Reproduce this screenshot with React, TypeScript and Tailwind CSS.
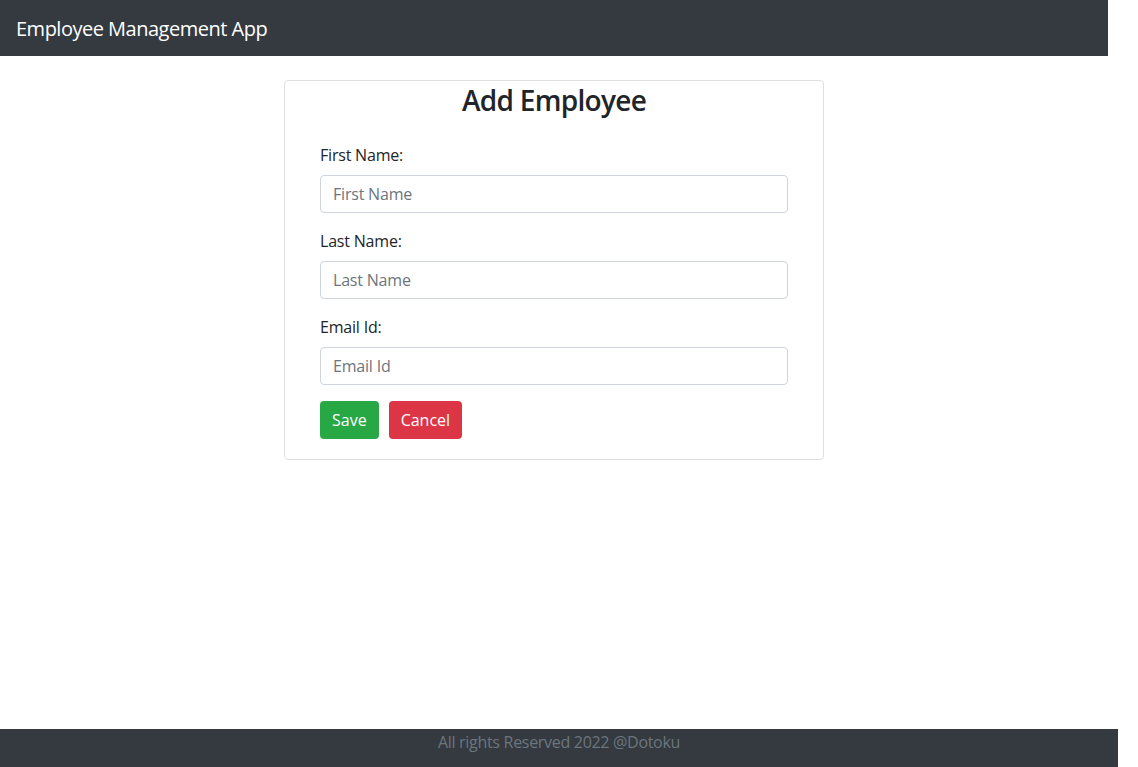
import React from 'react';

const font = { fontFamily: '"Open Sans", "Noto Sans", sans-serif' };

function Field({ label, placeholder }: { label: string; placeholder: string }) {
  return (
    <div className="mb-4">
      <label className="block mb-2 text-base leading-6 text-[#212529] tracking-[-0.2px]">{label}</label>
      <input
        type="text"
        placeholder={placeholder}
        className="block w-full h-[38px] px-3 rounded border border-[#ced4da] bg-white text-base text-[#495057] placeholder:text-[#6c757d] outline-none tracking-[-0.2px]"
      />
    </div>
  );
}

export default function App() {
  return (
    <div className="min-h-[767px] flex flex-col bg-white" style={font}>
      <header className="w-[1108px] h-14 bg-[#343a40] flex items-center px-4 pt-0.5">
        <span className="text-white text-xl tracking-[-0.5px]">Employee Management App</span>
      </header>

      <main className="flex-1 flex justify-center pt-6 pr-[30px]">
        <div className="w-[540px] h-fit border border-[#dfdfdf] rounded">
          <h3 className="text-center text-[28px] leading-[34px] font-semibold text-[#212529] mt-0 mb-2 tracking-[-0.7px] pt-0.5">Add Employee</h3>
          <div className="px-[35px] pt-5 pb-5 -mt-0.5">
            <form>
              <Field label="First Name:" placeholder="First Name" />
              <Field label="Last Name:" placeholder="Last Name" />
              <Field label="Email Id:" placeholder="Email Id" />
              <div className="flex gap-[10px]">
                <button type="button" className="h-[38px] px-3 rounded bg-[#28a745] text-white text-base">Save</button>
                <button type="button" className="h-[38px] px-3 rounded bg-[#dc3545] text-white text-base">Cancel</button>
              </div>
            </form>
          </div>
        </div>
      </main>

      <footer className="w-[1118px] h-[38px] bg-[#343a40] text-center text-[#6c757d] text-base leading-6 pt-px tracking-[-0.3px]">
        All rights Reserved 2022 @Dotoku
      </footer>
    </div>
  );
}
